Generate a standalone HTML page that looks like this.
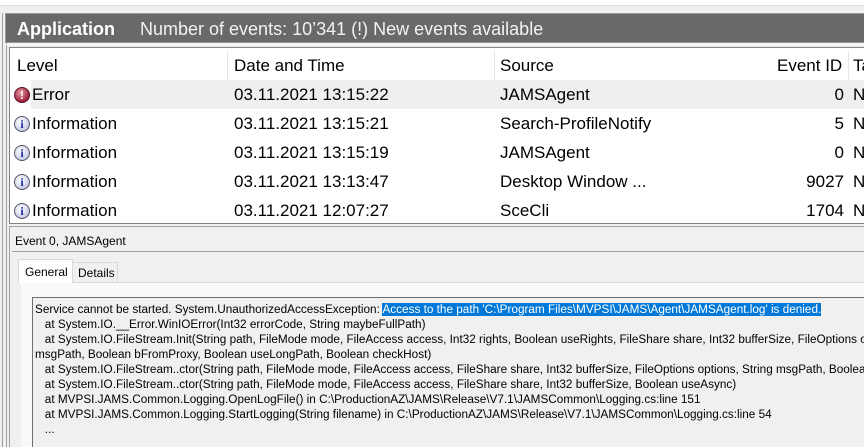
<!DOCTYPE html>
<html><head><meta charset="utf-8"><style>
*{margin:0;padding:0;box-sizing:border-box}
body{width:864px;height:447px;overflow:hidden;background:#f0f0f0;font-family:"Liberation Sans",sans-serif;position:relative}
.abs{position:absolute;white-space:nowrap}
#top{left:0;top:0;width:864px;height:6px;background:#fff;border-bottom:1px solid #dcdcdc}
#lf1{left:2px;top:13px;width:1px;height:434px;background:#a0a0a0}
#lf2{left:6px;top:43px;width:1px;height:404px;background:#a0a0a0}
#title{left:5px;top:13px;width:859px;height:30px;background:#696969;border:1px solid #9a9a9a;border-right:none;color:#fff;font-size:18px;line-height:30px;overflow:hidden}
#title b{position:absolute;left:11px}
#title span{position:absolute;left:134px;color:#f2f2f2}
#dl{left:5px;top:44px;width:859px;height:1px;background:#fff}
#list{left:9px;top:47px;width:855px;height:177px;background:#fff;border:1px solid #828282;border-right:none;overflow:hidden}
.row{position:absolute;left:0;width:855px;height:29px;font-size:17px;color:#000;line-height:29px}
.row span{position:absolute}
.sel{background:#efefef}
.vd{position:absolute;top:0;width:1px;height:29px;background:#e5e5e5}
.ic{position:absolute;left:4px;top:7px;width:16px;height:16px;border-radius:50%;border:1px solid #556;background:radial-gradient(circle at 40% 35%,#fff,#c9cde6 70%,#8a90b8);font:bold 12px/14px "Liberation Serif",serif;color:#1d2fa0;text-align:center}
.er{background:radial-gradient(circle at 40% 35%,#e59aa8,#a0213a 70%,#6a1020);border-color:#5a1020;color:#fff;font:bold 12px/14px "Liberation Sans",sans-serif}
#det{left:9px;top:226px;width:855px;height:221px;background:#f0f0f0;border-left:1px solid #a0a0a0;border-top:1px solid #a0a0a0}
#evt{left:15px;top:234px;font-size:12px}
#evl{left:12px;top:251px;width:852px;height:1px;background:#a0a0a0}
#tab1{left:18px;top:259px;width:55px;height:24px;background:#fff;border:1px solid #d9d9d9;border-bottom:none;font-size:12px;padding:5px 0 0 6px}
#tab2{left:72px;top:262px;width:46px;height:20px;background:#f0f0f0;border:1px solid #d9d9d9;border-bottom:none;font-size:12px;padding:3px 0 0 5px}
#panel{left:21px;top:282px;width:843px;height:165px;background:#f9f9f9;border-top:1px solid #d9d9d9}
#box{left:32px;top:297px;width:832px;height:150px;background:#f0f0f0;border:1px solid #6e6e6e;border-right:none;border-bottom:none;overflow:hidden}
.t{position:absolute;left:2px;font-size:11.75px;color:#000;line-height:14px;white-space:pre}
.hl{background:#0078d7;color:#fff}
</style></head><body>
<div class="abs" id="top"></div>
<div class="abs" id="lf1"></div>
<div class="abs" id="lf2"></div>
<div class="abs" id="title"><b>Application</b><span>Number of events: 10’341 (!) New events available</span></div>
<div class="abs" id="dl"></div>
<div class="abs" id="list">
 <div class="row" style="top:3px"><span style="left:7px">Level</span><span style="left:224px">Date and Time</span><span style="left:490px">Source</span><span style="left:767px">Event ID</span><span style="left:843px">Ta</span>
  <div class="vd" style="left:217px"></div><div class="vd" style="left:484px"></div><div class="vd" style="left:838px"></div></div>
 <div class="row sel" style="top:32px;left:21px"></div>
 <div class="row" style="top:32px"><div class="ic er">!</div><span style="left:22px">Error</span><span style="left:224px">03.11.2021 13:15:22</span><span style="left:490px">JAMSAgent</span><span style="right:21px">0</span><span style="left:843px">N</span></div>
 <div class="row" style="top:61px"><div class="ic">i</div><span style="left:22px">Information</span><span style="left:224px">03.11.2021 13:15:21</span><span style="left:490px">Search-ProfileNotify</span><span style="right:21px">5</span><span style="left:843px">N</span></div>
 <div class="row" style="top:90px"><div class="ic">i</div><span style="left:22px">Information</span><span style="left:224px">03.11.2021 13:15:19</span><span style="left:490px">JAMSAgent</span><span style="right:21px">0</span><span style="left:843px">N</span></div>
 <div class="row" style="top:119px"><div class="ic">i</div><span style="left:22px">Information</span><span style="left:224px">03.11.2021 13:13:47</span><span style="left:490px">Desktop Window ...</span><span style="right:21px">9027</span><span style="left:843px">N</span></div>
 <div class="row" style="top:148px"><div class="ic">i</div><span style="left:22px">Information</span><span style="left:224px">03.11.2021 12:07:27</span><span style="left:490px">SceCli</span><span style="right:21px">1704</span><span style="left:843px">N</span></div>
</div>
<div class="abs" id="det"></div>
<div class="abs" id="evt">Event 0, JAMSAgent</div>
<div class="abs" id="evl"></div>
<div class="abs" id="panel"></div>
<div class="abs" id="tab2">Details</div>
<div class="abs" id="tab1">General</div>
<div class="abs" id="box">
<div class="t" style="top:5px">Service cannot be started. System.UnauthorizedAccessException: <span class="hl">Access to the path 'C:\Program Files\MVPSI\JAMS\Agent\JAMSAgent.log' is denied.</span></div>
<div class="t" style="top:20px">   at System.IO.__Error.WinIOError(Int32 errorCode, String maybeFullPath)</div>
<div class="t" style="top:35px">   at System.IO.FileStream.Init(String path, FileMode mode, FileAccess access, Int32 rights, Boolean useRights, FileShare share, Int32 bufferSize, FileOptions options</div>
<div class="t" style="top:50px">msgPath, Boolean bFromProxy, Boolean useLongPath, Boolean checkHost)</div>
<div class="t" style="top:65px">   at System.IO.FileStream..ctor(String path, FileMode mode, FileAccess access, FileShare share, Int32 bufferSize, FileOptions options, String msgPath, Boolean bFromProxy)</div>
<div class="t" style="top:80px">   at System.IO.FileStream..ctor(String path, FileMode mode, FileAccess access, FileShare share, Int32 bufferSize, Boolean useAsync)</div>
<div class="t" style="top:95px">   at MVPSI.JAMS.Common.Logging.OpenLogFile() in C:\ProductionAZ\JAMS\Release\V7.1\JAMSCommon\Logging.cs:line 151</div>
<div class="t" style="top:110px">   at MVPSI.JAMS.Common.Logging.StartLogging(String filename) in C:\ProductionAZ\JAMS\Release\V7.1\JAMSCommon\Logging.cs:line 54</div>
<div class="t" style="top:125px">   ...</div>
</div>
</body></html>
